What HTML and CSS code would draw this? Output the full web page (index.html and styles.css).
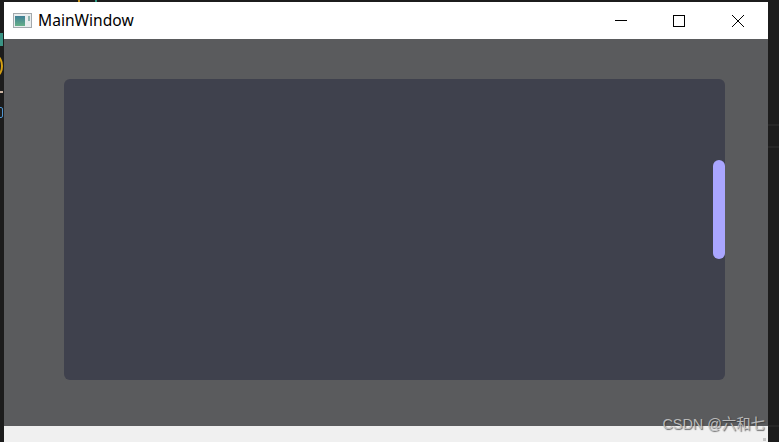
FILE: index.html
```html
<!DOCTYPE html>
<html lang="en">
<head>
<meta charset="utf-8">
<title>MainWindow</title>
<link rel="stylesheet" href="styles.css">
</head>
<body>
<div class="desktop">
  <div class="editor-edge">
    <span class="code-bit teal"></span>
    <span class="code-bit paren"></span>
    <span class="code-bit dash"></span>
    <span class="code-bit blue"></span>
  </div>
  <main class="window">
    <header class="titlebar">
      <svg class="app-icon" width="20" height="16" viewBox="0 0 20 16" aria-hidden="true">
        <defs>
          <linearGradient id="pane" x1="0" y1="0" x2="0" y2="1">
            <stop offset="0" stop-color="#3f7f96"/>
            <stop offset="1" stop-color="#66b088"/>
          </linearGradient>
        </defs>
        <rect x="0.5" y="0.5" width="18" height="14" fill="#e9edee" stroke="#a3a9ad"/>
        <rect x="2" y="3" width="10" height="10" fill="url(#pane)"/>
        <rect x="15" y="3" width="2" height="5" fill="#8fb5b0"/>
      </svg>
      <span class="title">MainWindow</span>
      <div class="controls">
        <button class="control" aria-label="Minimize">
          <svg width="12" height="12" viewBox="0 0 12 12"><path d="M0 5.5H12" stroke="#000" fill="none"/></svg>
        </button>
        <button class="control" aria-label="Maximize">
          <svg width="12" height="12" viewBox="0 0 12 12"><rect x="0.5" y="0.5" width="11" height="11" stroke="#000" fill="none"/></svg>
        </button>
        <button class="control" aria-label="Close">
          <svg width="12" height="12" viewBox="0 0 12 12"><path d="M0 0L12 12M12 0L0 12" stroke="#000" fill="none"/></svg>
        </button>
      </div>
    </header>
    <section class="content">
      <div class="panel">
        <div class="handle"></div>
      </div>
    </section>
    <footer class="statusbar">
      <span class="grip"></span>
    </footer>
  </main>
  <div class="gutter">
    <span class="gutter-line first"></span>
    <span class="gutter-line second"></span>
    <span class="gutter-line third"></span>
  </div>
</div>
<span class="top-speck orange"></span>
<span class="top-speck green"></span>
<div class="watermark">CSDN @六和七</div>
</body>
</html>
```
FILE: styles.css
```css
* { box-sizing: border-box; }
html, body { margin: 0; height: 100%; }
body {
  position: relative;
  overflow: hidden;
  background: #1c1c1c;
  font-family: "Noto Sans", "Noto Sans CJK SC", sans-serif;
}
.desktop {
  display: flex;
  width: 779px;
  height: 442px;
}
.editor-edge {
  position: relative;
  flex: 0 0 4px;
  overflow: hidden;
}
.code-bit { position: absolute; left: 0; display: block; }
.code-bit.teal { top: 33px; width: 3px; height: 13px; background: #3a9384; }
.code-bit.paren { top: 56px; left: -8px; width: 11px; height: 20px; border: 2px solid #d6a012; border-radius: 50%; }
.code-bit.dash { top: 91px; width: 3px; height: 2px; background: #cdb6a4; }
.code-bit.blue { top: 107px; left: -5px; width: 8px; height: 11px; border: 1px solid #4f94d0; border-radius: 2px; }
.top-speck { position: absolute; top: 0; width: 2px; height: 2px; }
.top-speck.orange { left: 78px; background: #c8951a; }
.top-speck.green { left: 95px; background: #2f9c86; }
.window {
  flex: 0 0 764px;
  display: flex;
  flex-direction: column;
  margin-top: 2px;
  background: #f0f0f0;
}
.titlebar {
  flex: 0 0 37px;
  display: flex;
  align-items: center;
  padding-left: 9px;
  background: #fff;
}
.app-icon { flex: none; margin-right: 5px; }
.title { font-size: 15.6px; line-height: 20px; margin-top: -2px; color: #000; }
.controls { display: flex; margin-left: auto; height: 100%; padding-right: 1px; }
.control {
  display: flex;
  align-items: center;
  justify-content: center;
  width: 58.5px;
  padding: 0;
  border: 0;
  background: none;
}
.content {
  flex: 0 0 387px;
  padding: 40px 43px 46px 60px;
  background: #5a5b5d;
}
.panel {
  position: relative;
  height: 301px;
  border-radius: 6px;
  background: #3f414d;
}
.handle {
  position: absolute;
  top: 81px;
  right: 0;
  width: 12px;
  height: 99px;
  border-radius: 6px;
  background: #aaa6ff;
}
.statusbar { position: relative; flex: 1; }
.grip {
  position: absolute;
  right: 2px;
  bottom: 1px;
  width: 3px;
  height: 3px;
  background: #c4c4c4;
}
.gutter { position: relative; flex: 1; }
.gutter-line {
  position: absolute;
  left: 0;
  right: 0;
  height: 2px;
  background: #262626;
}
.gutter-line.first { top: 124px; }
.gutter-line.second { top: 146px; }
.gutter-line.third { top: 425px; }
.watermark {
  position: absolute;
  right: 14px;
  top: 414px;
  font-family: "Liberation Sans", "Noto Sans CJK SC", sans-serif;
  font-size: 14.4px;
  line-height: 20px;
  color: rgba(198, 198, 198, 0.9);
  text-shadow: 1px 1px 1px rgba(50, 50, 50, 0.7);
}
```
